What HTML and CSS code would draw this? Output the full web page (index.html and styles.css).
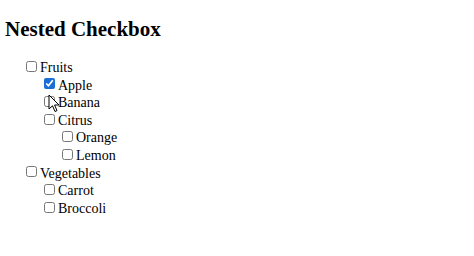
FILE: index.html
```html
<!DOCTYPE html>
<html lang="en">

<head>
    <meta charset="UTF-8" />
    <meta name="viewport" content="width=device-width, initial-scale=1.0" />
    <title>Nested Checkbox</title>
    <link rel="stylesheet" href="styles.css">
</head>

<body>
    <h1 class="title">Nested Checkbox</h1>
    <ul class="tree">
        <li>
            <label><input type="checkbox" />Fruits</label>
            <ul class="tree">
                <li><label><input type="checkbox" checked />Apple</label></li>
                <li class="hover-row">
                    <label><input type="checkbox" />Banana</label>
                    <svg class="cursor" width="12" height="19" viewBox="0 0 12 19">
                        <path d="M1 1 L1 15 L4.5 11.8 L7 17.5 L9 16.6 L6.6 11 L11 11 Z" fill="#fff" stroke="#000" stroke-width="1" stroke-linejoin="round" />
                    </svg>
                </li>
                <li>
                    <label><input type="checkbox" />Citrus</label>
                    <ul class="tree">
                        <li><label><input type="checkbox" />Orange</label></li>
                        <li><label><input type="checkbox" />Lemon</label></li>
                    </ul>
                </li>
            </ul>
        </li>
        <li>
            <label><input type="checkbox" />Vegetables</label>
            <ul class="tree">
                <li><label><input type="checkbox" />Carrot</label></li>
                <li><label><input type="checkbox" />Broccoli</label></li>
            </ul>
        </li>
    </ul>
</body>

</html>
```

FILE: styles.css
```css
* {
    margin: 0px;
    padding: 0px;
}

body {
    font-family: "Liberation Serif", "Times New Roman", serif;
    font-size: 14px;
    color: #000;
    background: #fff;
    padding: 0 5px;
}

.title {
    font-size: 21px;
    font-weight: bold;
    margin: 17px 0 17px;
}

.tree {
    list-style: none;
    padding-left: 18px;
}

body > .tree {
    padding-left: 21px;
}

.tree label {
    display: flex;
    align-items: center;
    height: 17.6px;
    line-height: 17.6px;
}

.tree input {
    width: 11px;
    height: 11px;
    margin: 0 3px 3px 0;
    accent-color: #1a6fd6;
}

.hover-row {
    position: relative;
}

.cursor {
    position: absolute;
    left: 4px;
    top: 0px;
}
```
